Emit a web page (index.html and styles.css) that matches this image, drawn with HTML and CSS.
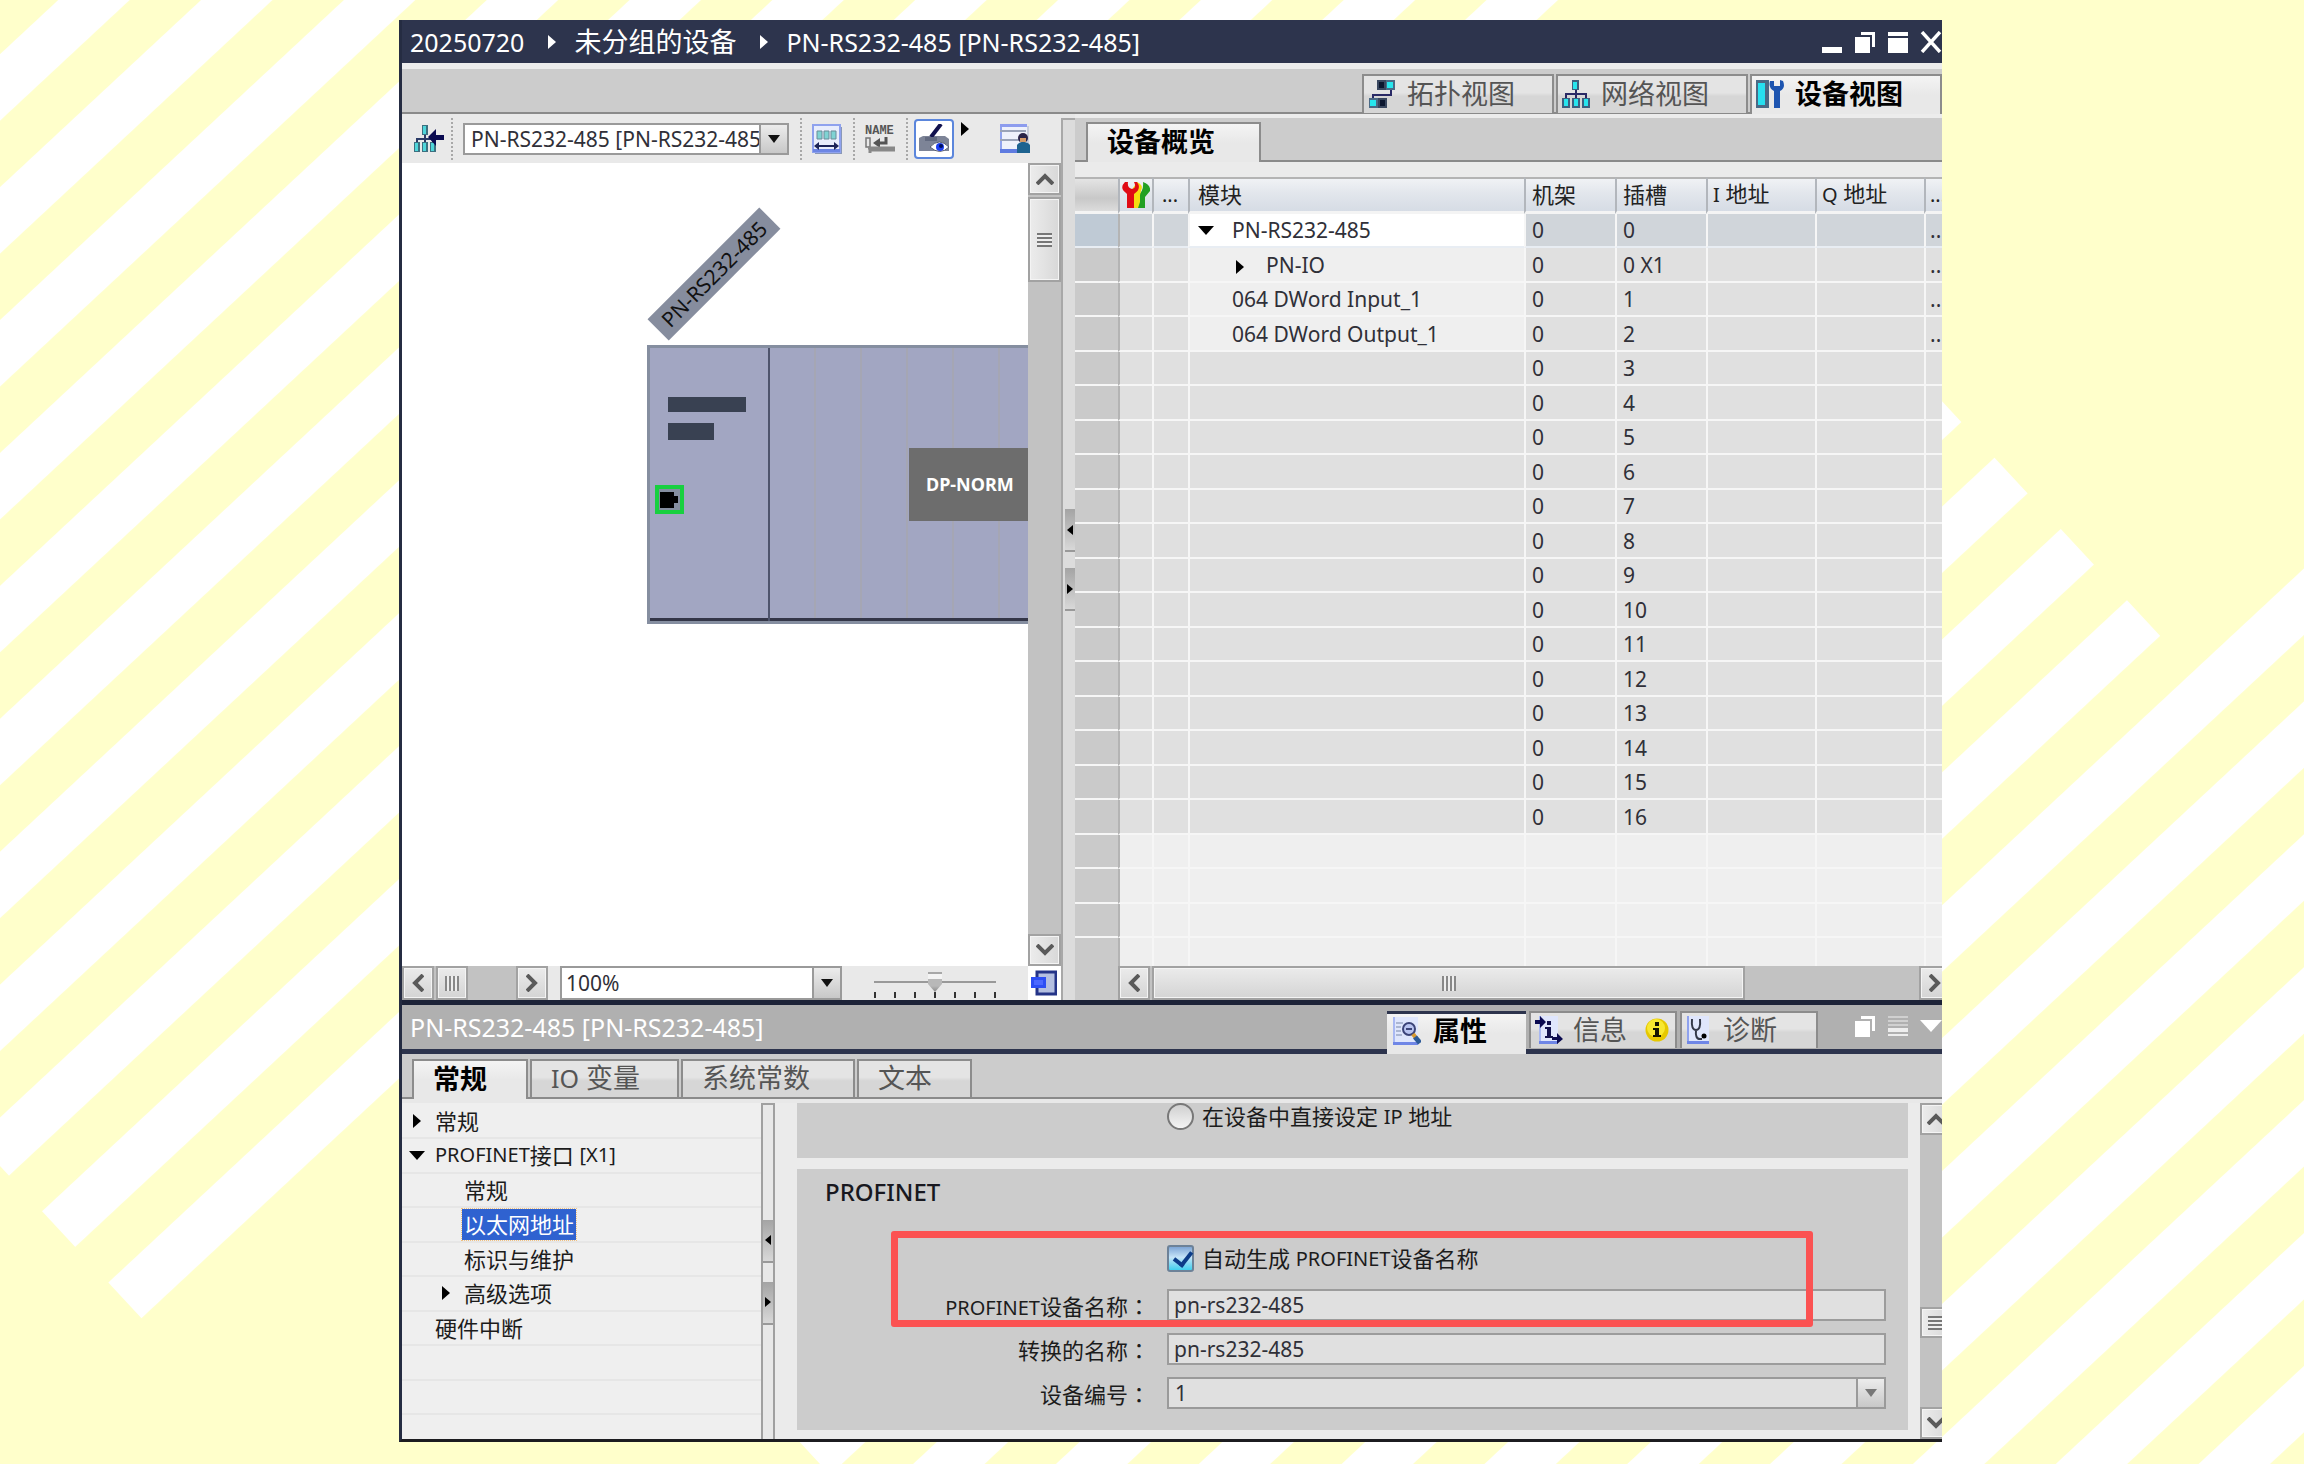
FILE: index.html
```html
<!DOCTYPE html>
<html lang="zh-CN">
<head>
<meta charset="utf-8">
<title>PN-RS232-485 设备视图</title>
<meta name="viewport" content="width=device-width, initial-scale=1">
<link rel="stylesheet" href="styles.css">
</head>
<body>
<svg class="backdrop" viewBox="0 0 2304 1464" preserveAspectRatio="none" aria-hidden="true">
  <defs>
    <pattern id="stripes" width="400" height="97.3" patternUnits="userSpaceOnUse" patternTransform="translate(0 54.2) rotate(-42.94)">
      <rect width="400" height="48.7" fill="#fff"/>
    </pattern>
  </defs>
  <path fill="url(#stripes)" d="M0 0H1615L158 1336L0 1166Z"/>
  <path fill="url(#stripes)" d="M1900 356L2177 654L2304 536V1464H820L760 1399Z"/>
</svg>

<main class="app">
  <header class="titlebar">
    <h1 class="crumbs">
      <span>20250720</span>
      <svg class="crumb-sep" viewBox="0 0 8 14"><path d="M0 0L8 7L0 14Z" fill="#fff"/></svg>
      <span class="cjk">未分组的设备</span>
      <svg class="crumb-sep" viewBox="0 0 8 14"><path d="M0 0L8 7L0 14Z" fill="#fff"/></svg>
      <span>PN-RS232-485 [PN-RS232-485]</span>
    </h1>
    <div class="win-controls">
      <button type="button" aria-label="最小化"><svg viewBox="0 0 22 22"><path d="M1 16h20v6H1z" fill="#fff"/></svg></button>
      <button type="button" aria-label="浮动"><svg viewBox="0 0 22 22"><path d="M7 1h14v15h-3V4H7z" fill="#fff"/><path d="M1 6h15v16H1z" fill="#fff"/></svg></button>
      <button type="button" aria-label="最大化"><svg viewBox="0 0 22 22"><path d="M1 1h20v4H1zM1 7h20v15H1z" fill="#fff"/></svg></button>
      <button type="button" aria-label="关闭"><svg viewBox="0 0 22 22"><path d="M2 1L20 21M20 1L2 21" stroke="#fff" stroke-width="3.4"/></svg></button>
    </div>
  </header>

  <nav class="view-tabs">
    <button type="button" class="tab">
      <svg class="icon" viewBox="0 0 28 28"><path d="M9 0h9v10H9zM10 18h9v10h-9z" fill="#3a4860"/><path d="M11 2h5v6h-5zM12 20h5v6h-5z" fill="#0c1730"/><path d="M18 0h9v10h-9zM1 18h9v10H1z" fill="#4a6a86"/><path d="M19 2h6v6h-6zM2 20h6v6H2z" fill="#27e6ee"/><path d="M23 10v5H5v3" fill="none" stroke="#2a2a66" stroke-width="2"/></svg>
      拓扑视图
    </button>
    <button type="button" class="tab">
      <svg class="icon" viewBox="0 0 28 28"><path d="M14 9v5M4 19v-5h20v5M14 14v5" fill="none" stroke="#2a2a66" stroke-width="2"/><path d="M10 0h7v10h-7zM0 18h8v10H0zM10 18h8v10h-8zM20 18h8v10h-8z" fill="#3d6080"/><path d="M11 2h4v7h-4zM2 19h4v7H2zM12 19h4v7h-4zM22 19h4v7h-4z" fill="#27e6ee"/></svg>
      网络视图
    </button>
    <button type="button" class="tab active">
      <svg class="icon" viewBox="0 0 28 28"><path d="M0 0h13v28H0z" fill="#4a6a86"/><path d="M2 3h7v22H2z" fill="#27e0f0"/><path d="M14 1q-2 7 4 10v17h6V11q6-3 3-10l-3-1v6h-6V1z" fill="#1e55b0"/></svg>
      设备视图
    </button>
  </nav>

  <section class="workspace">
    <div class="device-pane">
      <div class="toolbar">
        <button type="button" class="tool" aria-label="转到网络视图"><svg viewBox="0 0 30 30"><path d="M11 9v5M3 20v-5h16v5M11 14v6" fill="none" stroke="#2a3a66" stroke-width="2"/><path d="M8 1h6v10H8zM0 18h6v10H0zM8 18h6v10H8zM16 18h6v10h-6z" fill="#3d7080"/><path d="M9 2h3v8H9zM1 19h3v8H1zM9 19h3v8H9zM17 19h3v8h-3z" fill="#4fd6da"/><path d="M14 13l8-8v6h8v5h-8v6z" fill="#0a0a50"/></svg></button>
        <i class="tool-sep"></i>
        <div class="combo device-combo">
          <select aria-label="设备"><option>PN-RS232-485 [PN-RS232-485]</option></select>
          <span class="combo-arrow"><svg viewBox="0 0 12 8"><path d="M0 0h12L6 8z" fill="#111"/></svg></span>
        </div>
        <i class="tool-sep"></i>
        <button type="button" class="tool" aria-label="显示模块"><svg viewBox="0 0 30 30"><path d="M3 3h27v27H3z" fill="#8a98b8"/><path d="M1 1h27v27H1z" fill="#e8edfc" stroke="#8fa2ee" stroke-width="2"/><path d="M1 25h27v3H1z" fill="#6d86e4"/><path d="M5 7h5v8H5zM12 7h5v8h-5zM19 7h5v8h-5z" fill="#7fd3d3" stroke="#6b8d98"/><path d="M2 22l5-4v3h15v-3l5 4-5 4v-3H7v3z" fill="#1b2358"/></svg></button>
        <i class="tool-sep"></i>
        <button type="button" class="tool" aria-label="分配设备名称"><svg viewBox="0 0 30 30"><text x="0" y="10" class="icon-text">NAME</text><path d="M1 14h4v9H1z" fill="none" stroke="#777" stroke-width="1.5"/><path d="M21 13v6h-7" fill="none" stroke="#555" stroke-width="3"/><path d="M8 19l7-5v10z" fill="#555"/><path d="M3 24h26v2H5v3" fill="none" stroke="#888" stroke-width="3"/></svg></button>
        <i class="tool-sep"></i>
        <button type="button" class="tool pressed" aria-label="显示地址标签"><svg viewBox="0 0 30 30"><path d="M0 14l4-2h22l4 3v12H0z" fill="#7d8497"/><path d="M12 13L22 0" stroke="#12124e" stroke-width="4"/><path d="M6 13h12v4H6z" fill="#626a80"/><path d="M11 23q9-10 19 0q-9 9-19 0z" fill="#fff" stroke="#555c70"/><circle cx="21" cy="23" r="4" fill="#1c3ff0"/><circle cx="22" cy="22" r="2" fill="#001060"/></svg></button>
        <svg class="more" viewBox="0 0 8 14"><path d="M0 0L8 7L0 14Z"/></svg>
        <button type="button" class="tool" aria-label="布局"><svg viewBox="0 0 30 30"><path d="M2 2h27v27H2z" fill="#c8cddb"/><path d="M1 1h26v26H1z" fill="#eef1fb"/><path d="M1 1v26" stroke="#8fa2ee" stroke-width="2"/><path d="M0 0h27v3H0z" fill="#8d9cee"/><path d="M0 7h26M0 16h20" stroke="#9aa3b8" stroke-width="2"/><path d="M0 25h20v4H0z" fill="#5f7be0"/><circle cx="23" cy="14" r="5" fill="#2a2448"/><path d="M20 14h6v4h-6z" fill="#d49a68"/><path d="M17 29v-8q2-3 6-3q5 0 7 3v8z" fill="#1e6390"/></svg></button>
      </div>

      <div class="canvas-row">
        <div class="canvas">
          <div class="device-label">PN-RS232-485</div>
          <div class="device">
            <div class="device-head">
              <i class="plate"></i>
              <i class="plate short"></i>
              <i class="port"><svg viewBox="0 0 18 16"><path d="M0 0h14v4h4v7h-4v5H0z"/></svg></i>
            </div>
            <div class="device-slots"><div class="dp-norm">DP-NORM</div></div>
          </div>
        </div>
        <div class="scroll vertical">
          <button type="button" aria-label="向上"><svg viewBox="0 0 18 12"><path d="M1 11L9 3L17 11"/></svg></button>
          <div class="thumb canvas-thumb"><i class="grip"></i></div>
          <div class="track"></div>
          <button type="button" aria-label="向下"><svg viewBox="0 0 18 12"><path d="M1 1L9 9L17 1"/></svg></button>
        </div>
      </div>

      <div class="zoombar">
        <div class="scroll horizontal canvas-hscroll">
          <button type="button" aria-label="向左"><svg viewBox="0 0 12 18"><path d="M11 1L3 9L11 17"/></svg></button>
          <div class="thumb small-thumb"><i class="grip"></i></div>
          <div class="track"></div>
          <button type="button" aria-label="向右"><svg viewBox="0 0 12 18"><path d="M1 1L9 9L1 17"/></svg></button>
        </div>
        <div class="combo zoom-combo">
          <select aria-label="缩放"><option>100%</option></select>
          <span class="combo-arrow"><svg viewBox="0 0 12 8"><path d="M0 0h12L6 8z" fill="#111"/></svg></span>
        </div>
        <input class="zoom-slider" type="range" min="0" max="6" value="3" aria-label="缩放滑块">
        <button type="button" class="navigator" aria-label="总览"><svg viewBox="0 0 26 26"><path d="M6 2h19v22H6z" fill="#b4bfe0" stroke="#243488" stroke-width="3"/><path d="M0 7h15v11H0z" fill="#2c4ef4"/><path d="M3 10h9v5H3z" fill="#4a68ff"/></svg></button>
      </div>
    </div>

    <div class="splitter">
      <button type="button" aria-label="收起左侧"><svg viewBox="0 0 6 10"><path d="M6 0L0 5L6 10Z"/></svg></button>
      <button type="button" aria-label="收起右侧"><svg viewBox="0 0 6 10"><path d="M0 0L6 5L0 10Z"/></svg></button>
    </div>

    <div class="overview">
      <nav class="overview-tabs"><button type="button" class="tab active">设备概览</button></nav>
      <div class="table-wrap">
        <table class="modules">
          <colgroup><col class="c-sel"><col class="c-icon"><col class="c-dots"><col><col class="c-rack"><col class="c-rack"><col class="c-addr"><col class="c-addr"><col class="c-more"></colgroup>
          <thead>
            <tr><th></th><th class="wrench"><svg viewBox="0 0 28 28"><path d="M21 1q8 3 7 9l-5 6v11h-7V14q6-4 5-13z" fill="#23a023"/><path d="M15 1q7 3 4 9l-1 4v7l-2 6H9V10z" fill="#f6dd10"/><path d="M3 1q-6 6 1 11l1 1v14h7V13q8-5 3-12l-3 0q3 6-2 7q-5-1-4-7z" fill="#e00a14"/></svg></th><th><span class="latin">...</span></th><th>模块</th><th>机架</th><th>插槽</th><th><span class="latin">I</span> 地址</th><th><span class="latin">Q</span> 地址</th><th><span class="latin">...</span></th></tr>
          </thead>
          <tbody>
            <tr class="selected"><td></td><td></td><td></td><td><svg class="tri down" viewBox="0 0 16 9"><path d="M0 0h16L8 9z"/></svg>PN-RS232-485</td><td>0</td><td>0</td><td></td><td></td><td>...</td></tr>
            <tr class="filled"><td></td><td></td><td></td><td class="child"><svg class="tri right" viewBox="0 0 8 14"><path d="M0 0L8 7L0 14Z"/></svg>PN-IO</td><td>0</td><td>0 X1</td><td></td><td></td><td>...</td></tr>
            <tr class="filled"><td></td><td></td><td></td><td class="leaf">064 DWord Input_1</td><td>0</td><td>1</td><td></td><td></td><td>...</td></tr>
            <tr class="filled"><td></td><td></td><td></td><td class="leaf">064 DWord Output_1</td><td>0</td><td>2</td><td></td><td></td><td>...</td></tr>
            <tr><td></td><td></td><td></td><td></td><td>0</td><td>3</td><td></td><td></td><td></td></tr>
            <tr><td></td><td></td><td></td><td></td><td>0</td><td>4</td><td></td><td></td><td></td></tr>
            <tr><td></td><td></td><td></td><td></td><td>0</td><td>5</td><td></td><td></td><td></td></tr>
            <tr><td></td><td></td><td></td><td></td><td>0</td><td>6</td><td></td><td></td><td></td></tr>
            <tr><td></td><td></td><td></td><td></td><td>0</td><td>7</td><td></td><td></td><td></td></tr>
            <tr><td></td><td></td><td></td><td></td><td>0</td><td>8</td><td></td><td></td><td></td></tr>
            <tr><td></td><td></td><td></td><td></td><td>0</td><td>9</td><td></td><td></td><td></td></tr>
            <tr><td></td><td></td><td></td><td></td><td>0</td><td>10</td><td></td><td></td><td></td></tr>
            <tr><td></td><td></td><td></td><td></td><td>0</td><td>11</td><td></td><td></td><td></td></tr>
            <tr><td></td><td></td><td></td><td></td><td>0</td><td>12</td><td></td><td></td><td></td></tr>
            <tr><td></td><td></td><td></td><td></td><td>0</td><td>13</td><td></td><td></td><td></td></tr>
            <tr><td></td><td></td><td></td><td></td><td>0</td><td>14</td><td></td><td></td><td></td></tr>
            <tr><td></td><td></td><td></td><td></td><td>0</td><td>15</td><td></td><td></td><td></td></tr>
            <tr><td></td><td></td><td></td><td></td><td>0</td><td>16</td><td></td><td></td><td></td></tr>
            <tr class="blank"><td></td><td></td><td></td><td></td><td></td><td></td><td></td><td></td><td></td></tr>
            <tr class="blank"><td></td><td></td><td></td><td></td><td></td><td></td><td></td><td></td><td></td></tr>
            <tr class="blank"><td></td><td></td><td></td><td></td><td></td><td></td><td></td><td></td><td></td></tr>
            <tr class="blank"><td></td><td></td><td></td><td></td><td></td><td></td><td></td><td></td><td></td></tr>
          </tbody>
        </table>
      </div>
      <div class="scroll horizontal table-hscroll">
        <button type="button" aria-label="向左"><svg viewBox="0 0 12 18"><path d="M11 1L3 9L11 17"/></svg></button>
        <div class="thumb wide-thumb"><i class="grip"></i></div>
        <div class="track"></div>
        <button type="button" class="cut" aria-label="向右"><svg viewBox="0 0 12 18"><path d="M1 1L9 9L1 17"/></svg></button>
      </div>
    </div>
  </section>

  <section class="inspector">
    <header class="inspector-head">
      <h2>PN-RS232-485 [PN-RS232-485]</h2>
      <nav class="inspector-tabs">
        <button type="button" class="tab active tab-props">
          <svg class="icon" viewBox="0 0 28 28"><path d="M0 0h25v28H0z" fill="#dfe6fc"/><path d="M0 0h2v28H0z" fill="#a9b8f2"/><path d="M0 25h25v3H0z" fill="#6f86e6"/><path d="M3 6h7M3 10h5M3 14h5M3 18h6" stroke="#9aa6c4" stroke-width="1.5"/><circle cx="16" cy="12" r="6" fill="#b9c4f0" stroke="#3c4478" stroke-width="2"/><path d="M13 12h6" stroke="#3c4478" stroke-width="2"/><path d="M20 17l3 4" stroke="#d89a30" stroke-width="4"/><path d="M22 20l5 6" stroke="#2c5a98" stroke-width="5"/></svg>
          属性
        </button>
        <button type="button" class="tab tab-info">
          <svg class="icon" viewBox="0 0 28 28"><path d="M4 0h19v28H4z" fill="#dfe6fc"/><path d="M4 0h2v28H4z" fill="#a9b8f2"/><path d="M4 25h19v3H4z" fill="#6f86e6"/><path d="M0 4h5V0l6 6-6 6V8H0zM17 21h5v-4l6 6-6 5v-4h-5z" fill="#0a0a50"/><path d="M12 5h4v4h-4zM10 11h6v9h2v2h-8v-2h2v-7h-2z" fill="#12124e"/></svg>
          信息
          <svg class="badge" viewBox="0 0 24 24"><circle cx="12" cy="12" r="11.5" fill="#e6c800"/><circle cx="11" cy="10" r="9" fill="#f8e830"/><path d="M10 4h4v4h-4zM8 10h6v7h2v2H8v-2h2v-5H8z" fill="#151500"/></svg>
        </button>
        <button type="button" class="tab tab-diag">
          <svg class="icon" viewBox="0 0 22 28"><path d="M0 0h22v28H0z" fill="#dfe6fc"/><path d="M0 0h2v28H0z" fill="#8fa2ee"/><path d="M0 25h22v3H0z" fill="#6f86e6"/><path d="M5 3q-1 11 4 11q5 0 4-11M9 14q-1 9 4 9h2" fill="none" stroke="#333848" stroke-width="2"/><circle cx="17" cy="20" r="2.5"/></svg>
          诊断
        </button>
      </nav>
      <div class="inspector-controls">
        <button type="button" aria-label="浮动"><svg viewBox="0 0 22 22"><path d="M7 1h14v15h-3V4H7z" fill="#fff"/><path d="M1 6h15v16H1z" fill="#fff"/></svg></button>
        <button type="button" aria-label="最大化"><svg viewBox="0 0 22 22"><path d="M1 2h20M1 6h20M1 10h20" stroke="#d0d0d0" stroke-width="2"/><path d="M1 13h20v4H1zM1 19h20v2H1z" fill="#eee"/></svg></button>
        <button type="button" aria-label="收起"><svg viewBox="0 0 22 22"><path d="M0 5h22L11 17z" fill="#fff"/></svg></button>
      </div>
    </header>

    <nav class="prop-tabs">
      <button type="button" class="tab active t-general">常规</button>
      <button type="button" class="tab t-io"><span class="latin">IO</span>&nbsp;变量</button>
      <button type="button" class="tab t-const">系统常数</button>
      <button type="button" class="tab t-text">文本</button>
    </nav>

    <div class="inspector-body">
      <ul class="tree">
        <li><a href="#"><svg class="tri right" viewBox="0 0 8 14"><path d="M0 0L8 7L0 14Z"/></svg>常规</a></li>
        <li><a href="#"><svg class="tri down" viewBox="0 0 16 9"><path d="M0 0h16L8 9z"/></svg><span class="latin">PROFINET</span>接口&nbsp;<span class="latin">[X1]</span></a></li>
        <li class="level-2"><a href="#">常规</a></li>
        <li class="level-2"><a href="#"><span class="current">以太网地址</span></a></li>
        <li class="level-2"><a href="#">标识与维护</a></li>
        <li class="level-2"><a href="#"><svg class="tri right" viewBox="0 0 8 14"><path d="M0 0L8 7L0 14Z"/></svg>高级选项</a></li>
        <li><a href="#">硬件中断</a></li>
        <li></li>
        <li></li>
        <li></li>
      </ul>
      <div class="splitter tree-splitter">
        <button type="button" aria-label="收起目录"><svg viewBox="0 0 6 10"><path d="M6 0L0 5L6 10Z"/></svg></button>
        <button type="button" aria-label="收起内容"><svg viewBox="0 0 6 10"><path d="M0 0L6 5L0 10Z"/></svg></button>
      </div>
      <form class="settings">
        <div class="panel ip-panel">
          <label class="choice"><input type="radio" name="ip">在设备中直接设定&nbsp;<span class="latin">IP</span> 地址</label>
        </div>
        <fieldset class="panel pn-panel">
          <legend>PROFINET</legend>
          <div class="fields">
            <label class="choice auto-name"><input type="checkbox" checked>自动生成&nbsp;<span class="latin">PROFINET</span>设备名称</label>
            <label class="field-label" for="pn-name"><span class="latin">PROFINET</span>设备名称<span class="colon" lang="zh-Hant">：</span></label>
            <input class="field" id="pn-name" type="text" value="pn-rs232-485" readonly>
            <label class="field-label" for="conv-name">转换的名称<span class="colon" lang="zh-Hant">：</span></label>
            <input class="field" id="conv-name" type="text" value="pn-rs232-485" readonly>
            <label class="field-label" for="dev-no">设备编号<span class="colon" lang="zh-Hant">：</span></label>
            <div class="combo number-combo">
              <select id="dev-no"><option>1</option></select>
              <span class="combo-arrow"><svg viewBox="0 0 12 8"><path d="M0 0h12L6 8z" fill="#777"/></svg></span>
            </div>
          </div>
          <div class="highlight"></div>
        </fieldset>
      </form>
      <div class="scroll vertical form-scroll">
        <button type="button" aria-label="向上"><svg viewBox="0 0 18 12"><path d="M1 11L9 3L17 11"/></svg></button>
        <div class="track"></div>
        <div class="thumb short-thumb"><i class="grip"></i></div>
        <div class="track lower"></div>
        <button type="button" aria-label="向下"><svg viewBox="0 0 18 12"><path d="M1 1L9 9L17 1"/></svg></button>
      </div>
    </div>
  </section>
</main>
</body>
</html>
```
FILE: styles.css
```css
:root {
  --navy: #2d344d;
  --bar: #cccccc;
  --light: #e8e8e8;
  --line: #8a8a8a;
  --text: #303038;
  --body: 21px;
  --cjk: 22px;
  --head: 27px;
}

* { box-sizing: border-box; }

body {
  margin: 0;
  min-height: 100vh;
  padding: 20px 0 22px;
  display: grid;
  grid-template-columns: minmax(0, 399fr) minmax(0, 1543fr) minmax(0, 362fr);
  background: #ffffcb;
  color: var(--text);
  font: 21px/30px "Noto Sans", "Noto Sans CJK SC", sans-serif;
}

button, input, select { font: inherit; color: inherit; }
button { margin: 0; padding: 0; border: 0; background: none; }
h1, h2 { margin: 0; font-weight: 400; }
svg { display: block; }
.latin { font-size: 20px; }

.backdrop {
  position: absolute;
  inset: 0;
  width: 100%;
  height: 100%;
  z-index: -1;
}

.app {
  grid-column: 2;
  height: calc(100vh - 42px);
  min-height: 900px;
  display: flex;
  flex-direction: column;
  overflow: hidden;
  border-left: 3px solid #252c42;
  border-bottom: 3px solid #1c1c20;
  background: var(--light);
}

/* title bar */
.titlebar {
  flex: none;
  height: 43px;
  display: flex;
  align-items: center;
  justify-content: space-between;
  background: var(--navy);
  color: #fff;
}
.crumbs {
  display: flex;
  align-items: center;
  padding-left: 8px;
  font-size: 25px;
  line-height: 36px;
  white-space: nowrap;
}
.crumbs .cjk { font-size: var(--head); }
.crumb-sep { width: 8px; height: 14px; margin: 0 18px 0 24px; }
.win-controls { display: flex; gap: 11px; }
.win-controls svg, .inspector-controls svg { width: 22px; height: 22px; }

/* tabs */
.tab {
  display: flex;
  align-items: center;
  padding: 0 0 2px;
  border: 2px solid #8c8c8c;
  border-bottom: 0;
  background: linear-gradient(#e4e4e4 0 45%, #d6d6d6 55% 100%);
  color: #555;
  font-size: var(--head);
  line-height: 34px;
  white-space: nowrap;
}
.tab.active {
  background: linear-gradient(#f4f4f4, var(--light) 50%);
  color: #000;
  font-weight: 700;
}
.tab .icon { flex: none; width: 28px; height: 28px; }

.view-tabs {
  flex: none;
  height: 51px;
  display: flex;
  justify-content: flex-end;
  align-items: flex-end;
  gap: 2px;
  border-top: 6px solid #ececec;
  box-shadow: inset 0 -2px var(--line);
  background: var(--bar);
}
.view-tabs .tab { width: 192px; height: 39px; padding-left: 4px; gap: 11px; margin-bottom: 1px; }
.view-tabs .active { height: 40px; margin-bottom: 0; }

/* workspace */
.workspace {
  flex: 1;
  min-height: 0;
  display: grid;
  grid-template-columns: minmax(0, 659fr) 14px minmax(0, 867fr);
}
.device-pane, .overview {
  min-width: 0;
  min-height: 0;
  display: flex;
  flex-direction: column;
}
.toolbar {
  flex: none;
  height: 49px;
  display: flex;
  align-items: center;
  padding-left: 12px;
  background: #e9e9e9;
}
.tool { flex: none; width: 30px; height: 30px; }
.tool svg { width: 30px; height: 30px; }
.tool-sep { height: 42px; margin: 0 10px 0 11px; border-left: 2px dotted #a8a8a8; }
.toolbar .tool-sep:nth-of-type(1) { margin-left: 7px; }
.tool.pressed {
  width: 40px;
  height: 40px;
  margin-left: -4px;
  padding: 3px;
  border: 2px solid #5b86dc;
  border-radius: 4px;
  background: #fff;
}
.icon-text { font: 700 12px "Liberation Mono", monospace; fill: #555; }
.more { width: 8px; height: 14px; margin: 0 31px 20px 7px; }

.combo {
  position: relative;
  border: 2px solid #9a9a9a;
  background: #fff;
}
.combo select {
  display: block;
  width: 100%;
  height: 28px;
  padding: 0 28px 0 6px;
  border: 0;
  border-radius: 0;
  background: transparent;
  appearance: none;
  line-height: 28px;
}
.combo-arrow {
  position: absolute;
  inset: 0 0 0 auto;
  width: 28px;
  display: grid;
  place-items: center;
  border-left: 2px solid #9a9a9a;
  background: linear-gradient(#ececec, #c8c8c8);
  pointer-events: none;
}
.combo-arrow svg { width: 12px; height: 8px; }
.device-combo { width: 326px; }

.canvas-row { flex: 1; min-height: 0; display: flex; }
.canvas {
  position: relative;
  flex: 1;
  overflow: hidden;
  background: #fff;
}
.device-label {
  position: absolute;
  left: 233px;
  top: 96px;
  width: 158px;
  height: 30px;
  background: #868d9e;
  color: #111;
  text-align: center;
  line-height: 30px;
  transform: rotate(-45deg);
}
.device {
  position: absolute;
  left: 245px;
  right: -4px;
  top: 182px;
  height: 279px;
  display: flex;
  border: 3px solid #858ea0;
  background: #a2a6c2;
  box-shadow: inset 0 -3px #343648;
}
.device-head {
  flex: none;
  width: 120px;
  padding: 49px 0 0 5px;
  border-right: 2px solid #4e546c;
}
.plate { display: block; width: 78px; height: 15px; margin: 0 0 11px 13px; background: #394152; }
.plate.short { width: 46px; height: 17px; }
.port {
  display: block;
  width: 29px;
  height: 29px;
  margin-top: 45px;
  padding: 3px 0 0 1px;
  border: 4px solid #18d040;
  background: #858ea0;
}
.port svg { width: 18px; height: 16px; }
.device-slots {
  flex: 1;
  margin-bottom: 3px;
  padding-top: 100px;
  background: repeating-linear-gradient(90deg, transparent 0 44px, #a5a6b4 44px 46px);
}
.dp-norm {
  height: 73px;
  margin-left: 139px;
  padding-left: 17px;
  background: #6d6d6d;
  color: #fff;
  font-size: 18px;
  font-weight: 700;
  line-height: 73px;
}

/* scroll bars */
.scroll { flex: none; display: flex; gap: 2px; background: #c2c2c2; }
.scroll.vertical { width: 33px; flex-direction: column; }
.scroll button, .thumb {
  flex: none;
  display: grid;
  place-items: center;
  border: 2px solid #a2a2a2;
  background: linear-gradient(90deg, #ececec, #d8d8d8);
  box-shadow: inset 0 0 0 1px #f4f4f4;
}
.scroll.vertical button { height: 32px; }
.scroll.horizontal button { width: 32px; }
.scroll.horizontal > * { background-image: linear-gradient(#ebebeb, #d4d4d4); }
.scroll.horizontal > .track { background: none; }
.scroll button path { fill: none; stroke: #5a5a5a; stroke-width: 4; }
.scroll.vertical button svg { width: 18px; height: 12px; }
.scroll.horizontal button svg { width: 12px; height: 18px; }
.track { flex: 1; }
.vertical .grip { width: 15px; height: 14px; background: repeating-linear-gradient(#777 0 2px, #eee 2px 4px); }
.horizontal .grip { width: 14px; height: 15px; background: repeating-linear-gradient(90deg, #888 0 2px, #eee 2px 4px); }
.canvas-thumb { height: 85px; }

.zoombar { flex: none; height: 34px; display: flex; align-items: stretch; background: #e9e9e9; }
.canvas-hscroll { width: 146px; }
.small-thumb { width: 32px; }
.zoom-combo { width: 282px; margin-left: 12px; }
.zoom-combo select { height: 30px; padding-left: 4px; line-height: 30px; }
.zoom-slider {
  width: 122px;
  height: 32px;
  margin: 0 auto;
  appearance: none;
  background:
    repeating-linear-gradient(90deg, #333 0 2px, transparent 2px 20px) 0 26px / 100% 6px no-repeat,
    linear-gradient(#999, #999) 0 15px / 100% 2px no-repeat;
}
.zoom-slider::-webkit-slider-thumb {
  appearance: none;
  width: 14px;
  height: 20px;
  background: linear-gradient(#a8a8a8 0 2px, #f4f4f4 2px 7px, #b8b8b8 7px 14px, #888 20px);
  clip-path: polygon(0 0, 100% 0, 100% 60%, 50% 100%, 0 60%);
}
.navigator { flex: none; width: 33px; padding: 3px; background: #fff; }
.navigator svg { width: 26px; height: 26px; }

.splitter {
  margin-top: 4px;
  display: flex;
  flex-direction: column;
  justify-content: center;
  align-items: flex-end;
  gap: 16px;
  border-left: 2px solid #a8a8a8;
  border-top: 2px solid #a8a8a8;
  background: #dcdcdc;
}
.splitter button {
  width: 10px;
  height: 43px;
  display: grid;
  place-items: center;
  border-bottom: 2px solid #999;
  background: linear-gradient(#a4a4a4, #d8d8d8);
}
.splitter svg { width: 6px; height: 10px; }

/* overview table */
.overview-tabs {
  flex: none;
  height: 48px;
  display: flex;
  align-items: flex-end;
  padding-left: 11px;
  border-top: 4px solid #ececec;
  box-shadow: inset 0 -2px var(--line);
  background: var(--bar);
}
.overview-tabs .tab { width: 175px; height: 40px; padding-left: 19px; }
.table-wrap { flex: 1; min-height: 0; padding-top: 15px; overflow: hidden; background: #ebebeb; }
.modules { width: 100%; table-layout: fixed; border-collapse: separate; border-spacing: 0; }
.c-sel { width: 43px; }
.c-icon { width: 34px; }
.c-dots { width: 36px; }
.c-rack { width: 91px; }
.c-addr { width: 109px; }
.c-more { width: 18px; }
.modules th {
  height: 36px;
  padding: 0 0 2px 8px;
  border-top: 2px solid #b4b4b4;
  border-bottom: 3px solid #f4f4f4;
  border-left: 2px solid #b2b6bc;
  background: linear-gradient(#f0f2f5, #e2e6ec 45%, #d6dce5);
  font-size: var(--cjk);
  font-weight: 400;
  line-height: 29px;
  text-align: left;
  white-space: nowrap;
  overflow: hidden;
  color: #222;
}
.modules th:first-child { border-left: 0; background: linear-gradient(#e4e4e4, #c8c8c8 60%, #dcdcdc); }
.modules th.wrench { padding: 0 0 0 2px; }
.wrench svg { width: 28px; height: 28px; }
.modules th:nth-child(5), .modules td:nth-child(5),
.modules th:nth-child(6), .modules td:nth-child(6) { padding-left: 6px; }
.modules th:nth-child(7), .modules th:nth-child(8) { padding-left: 5px; }
.modules th:last-child, .modules td:last-child { padding-left: 4px; }
.modules td {
  height: 34px;
  padding: 0 0 0 8px;
  border-left: 2px solid #f6f6f6;
  border-bottom: 2px solid #f6f6f6;
  background: #e0e0e0;
  line-height: 30px;
  white-space: nowrap;
  overflow: hidden;
}
.modules tr:nth-child(even) td { height: 35px; }
.modules td:first-child { border-left: 0; background: #cacaca; }
.modules td:nth-child(2) { border-left-color: #b4b4b4; }
.modules .selected td { background: #d0d5da; border-bottom-color: #e8edf3; }
.modules .selected td:first-child { background: #bfcad5; }
.modules .selected td:nth-child(4) { background: #fff; }
.modules .filled td:nth-child(4), .modules .blank td:not(:first-child) { background: #efefef; }
.modules td.leaf { padding-left: 42px; }
.modules td.child { padding-left: 46px; }
.modules .tri { display: inline-block; margin-right: 18px; vertical-align: 3px; }
.modules .tri.right { margin-right: 22px; vertical-align: -1px; }
.tri.down { width: 16px; height: 9px; }
.tri.right { width: 8px; height: 14px; }

.table-hscroll { height: 34px; border-left: 43px solid #cacaca; overflow: hidden; }
.table-hscroll .wide-thumb { width: 72%; }
.table-hscroll .cut { margin-right: -9px; }

/* inspector */
.inspector { flex: none; border-top: 5px solid #1d2338; }
.inspector-head {
  height: 49px;
  display: flex;
  align-items: center;
  background: #b0b0b0;
  box-shadow: inset 0 -5px var(--navy);
}
.inspector-head h2 { flex: 1; padding: 0 0 6px 8px; color: #fff; font-size: 25px; line-height: 36px; white-space: nowrap; }
.inspector-tabs { align-self: flex-end; display: flex; gap: 3px; }
.inspector-tabs .tab { height: 37px; margin-bottom: 5px; padding-left: 4px; gap: 10px; }
.inspector-tabs .active { height: 43px; margin: 0; padding: 0 0 6px 6px; gap: 12px; border: 0; border-top: 3px solid var(--navy); }
.inspector-tabs .tab-props { width: 139px; }
.inspector-tabs .tab-info { width: 148px; }
.inspector-tabs .tab-diag { width: 138px; padding-left: 5px; gap: 14px; }
.inspector-tabs .tab-diag .icon { width: 22px; }
.badge { width: 24px; height: 24px; margin-left: 8px; }
.inspector-controls { display: flex; gap: 11px; padding: 0 0 8px 36px; }

.prop-tabs {
  height: 45px;
  display: flex;
  align-items: flex-end;
  gap: 2px;
  padding-left: 10px;
  background: var(--bar);
  box-shadow: inset 0 -2px var(--line);
}
.prop-tabs .tab { height: 38px; margin-bottom: 2px; padding-left: 19px; }
.prop-tabs .active { height: 40px; margin-bottom: 0; }
.prop-tabs .latin { font-size: 25px; }
.t-general { width: 116px; }
.t-io { width: 149px; }
.t-const { width: 174px; }
.t-text { width: 115px; }

.inspector-body { display: flex; padding-top: 4px; }
.tree {
  flex: none;
  width: 359px;
  margin: 0;
  padding: 2px 0 0;
  list-style: none;
  background: #efefef;
  font-size: var(--cjk);
}
.tree li { height: 34px; padding-left: 33px; border-bottom: 2px solid #e6e6e6; }
.tree li:nth-child(even) { height: 35px; }
.tree li:last-child { height: 23px; border: 0; }
.tree .level-2 { padding-left: 62px; }
.tree a { display: flex; align-items: center; height: 32px; color: #1c1c1c; text-decoration: none; line-height: 32px; }
.tree .tri.right { margin: 0 14px 0 -22px; }
.tree .tri.down { margin: 0 10px 0 -26px; }
.current { margin-left: -2px; padding: 0 2px; background: #2f62d0; outline: 1px dotted #f0c080; color: #fff; line-height: 31px; }
.tree-splitter { flex: none; width: 14px; margin: 0; gap: 19px; border: 2px solid #a0a0a0; border-bottom: 0; background: #e8e8e8; }

.settings { flex: 1; min-width: 0; padding: 0 12px 9px 22px; background: #ebebeb; }
.panel { margin: 0; border: 0; background: var(--bar); }
.choice { display: flex; align-items: center; height: 27px; font-size: var(--cjk); line-height: 27px; color: #1c1c1c; white-space: pre; }
.choice input { flex: none; appearance: none; width: 27px; height: 27px; margin: 0 8px 0 0; }
.choice input[type="radio"] { border: 2px solid #787878; border-radius: 50%; background: linear-gradient(#d0d0d0, #f4f4f4); }
.choice input[type="checkbox"] {
  border: 2px solid #6d8298;
  border-radius: 3px;
  background: linear-gradient(#7fa6d6, #c6e4f8 45%, #3fd0ee);
}
.choice input[type="checkbox"]:checked::after {
  content: "";
  display: block;
  width: 8px;
  height: 14px;
  margin: 1px 0 0 8px;
  border: solid #0c3c88;
  border-width: 0 4px 4px 0;
  transform: rotate(38deg);
}
.ip-panel { height: 55px; margin-bottom: 11px; padding-left: 370px; }
.pn-panel { position: relative; min-width: 0; height: 261px; padding: 8px 22px 0 28px; }
.pn-panel legend { float: left; padding: 0; color: #181820; font-size: 24px; font-weight: 500; line-height: 30px; }
.fields {
  clear: both;
  display: grid;
  grid-template-columns: 325px minmax(0, 1fr);
  grid-template-rows: 32px;
  grid-auto-rows: 32px;
  column-gap: 17px;
  row-gap: 12px;
  padding-top: 38px;
}
.auto-name { grid-column: 2; }
.field-label { height: 32px; font-size: var(--cjk); line-height: 32px; text-align: right; color: #1c1c1c; white-space: nowrap; }
.colon { font-family: "Noto Sans CJK TC", sans-serif; }
.field { width: 100%; height: 32px; padding: 0 5px; border: 2px solid #9c9c9c; border-radius: 0; background: #e0e0e0; outline: 0; }
.number-combo { background: #e0e0e0; }
.highlight {
  position: absolute;
  left: 94px;
  right: 95px;
  top: 62px;
  height: 96px;
  border: 7px solid #fb5252;
  border-radius: 3px;
  pointer-events: none;
}

.form-scroll.vertical { width: 22px; overflow: hidden; }
.form-scroll button, .form-scroll .thumb { width: 31px; }
.form-scroll .short-thumb { height: 31px; }
.form-scroll .track { flex: 172; }
.form-scroll .lower { flex: 66; }
```
